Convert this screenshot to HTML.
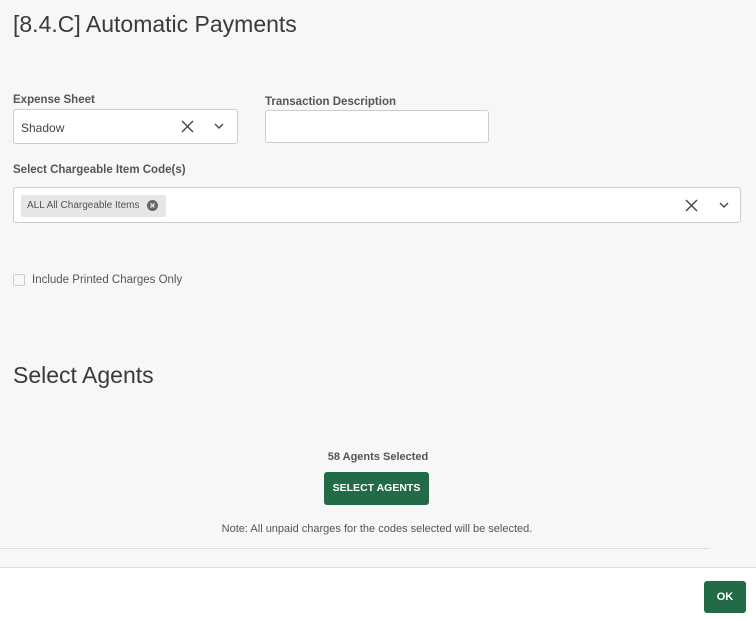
<!DOCTYPE html>
<html><head><style>
*{box-sizing:border-box;margin:0;padding:0}
body{width:756px;height:621px;background:#f7f7f7;font-family:"Liberation Sans",sans-serif;color:#444;position:relative;overflow:hidden}
.a{position:absolute}
h1{position:absolute;left:13px;top:11px;font-size:23px;font-weight:normal;color:#3a3a3a}
h2{position:absolute;left:13px;top:362px;font-size:23px;font-weight:normal;color:#3a3a3a}
.lbl{font-size:11.5px;font-weight:bold;color:#555}
.box{background:#fff;border:1px solid #ccc;border-radius:3px}
.btn{background:#236b47;color:#fff;font-weight:bold;font-size:11px;border-radius:3px;text-align:center}
</style></head><body>
<h1>[8.4.C] Automatic Payments</h1>
<div class="a lbl" style="left:13px;top:94px">Expense Sheet</div>
<div class="a box" style="left:13px;top:109px;width:225px;height:35px"></div>
<div class="a" style="left:21px;top:121px;font-size:12px;color:#444">Shadow</div>
<svg class="a" style="left:181px;top:120px" width="13" height="13"><path d="M1 1L12 12M12 1L1 12" stroke="#444" stroke-width="1.4"/></svg>
<svg class="a" style="left:214px;top:123px" width="10" height="7"><path d="M1 1L5 5L9 1" stroke="#444" stroke-width="1.4" fill="none"/></svg>
<div class="a lbl" style="left:265px;top:96px">Transaction Description</div>
<div class="a box" style="left:265px;top:110px;width:224px;height:33px"></div>
<div class="a lbl" style="left:13px;top:164px">Select Chargeable Item Code(s)</div>
<div class="a box" style="left:13px;top:187px;width:728px;height:36px"></div>
<div class="a" style="left:21px;top:195px;width:145px;height:22px;background:#e6e6e6;border-radius:2px;font-size:10px;color:#555;padding:5px 0 0 6px">ALL All Chargeable Items</div>
<svg class="a" style="left:147px;top:200px" width="11" height="11"><circle cx="5.5" cy="5.5" r="5.5" fill="#666"/><path d="M3.5 3.5L7.5 7.5M7.5 3.5L3.5 7.5" stroke="#e6e6e6" stroke-width="1.4"/></svg>
<svg class="a" style="left:685px;top:199px" width="13" height="13"><path d="M1 1L12 12M12 1L1 12" stroke="#444" stroke-width="1.4"/></svg>
<svg class="a" style="left:719px;top:202px" width="10" height="7"><path d="M1 1L5 5L9 1" stroke="#444" stroke-width="1.4" fill="none"/></svg>
<div class="a" style="left:13px;top:274px;width:12px;height:12px;border:1px solid #ccc;border-radius:2px;background:#f7f7f7"></div>
<div class="a" style="left:32px;top:274px;font-size:11.5px;color:#555">Include Printed Charges Only</div>
<h2>Select Agents</h2>
<div class="a" style="left:0;width:756px;top:451px;text-align:center;font-size:11px;font-weight:bold;color:#555">58 Agents Selected</div>
<div class="a btn" style="left:324px;top:472px;width:105px;height:33px;line-height:33px;font-size:10.5px">SELECT AGENTS</div>
<div class="a" style="left:0;width:754px;top:523px;text-align:center;font-size:11px;color:#555">Note: All unpaid charges for the codes selected will be selected.</div>
<div class="a" style="left:0;top:548px;width:709px;height:1px;background:#ddd"></div>
<div class="a" style="left:0;top:567px;width:756px;height:54px;background:#fff;border-top:1px solid #ddd"></div>
<div class="a btn" style="left:704px;top:581px;width:42px;height:32px;line-height:32px">OK</div>
</body></html>
